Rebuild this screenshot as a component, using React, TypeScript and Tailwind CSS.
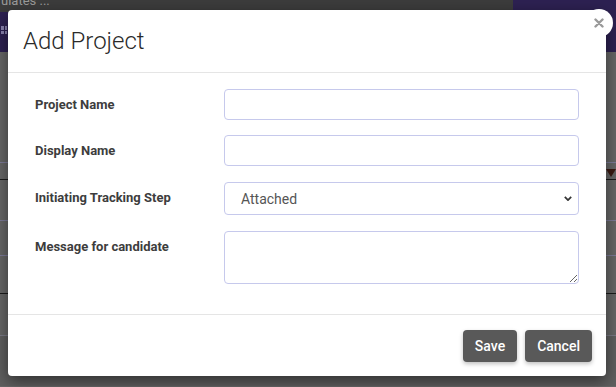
import { useState } from "react";

const font = { fontFamily: "Roboto, 'Liberation Sans', Arial, sans-serif" };

function CloseIcon() {
  return (
    <svg viewBox="0 0 10 10" className="size-[10px]">
      <path d="M1.5 1.5 L8.5 8.5 M8.5 1.5 L1.5 8.5" stroke="#9a9a9a" strokeWidth="2.4" strokeLinecap="round" />
    </svg>
  );
}

function Chevron() {
  return (
    <svg viewBox="0 0 10 6" className="w-[8px] h-[5px]">
      <path d="M1 1 L5 5 L9 1" fill="none" stroke="#343434" strokeWidth="2.2" />
    </svg>
  );
}

function FormRow({ label, children, className = "" }: { label: string; children: React.ReactNode; className?: string }) {
  return (
    <div className={`flex items-start ${className}`}>
      <label className="w-[189px] shrink-0 pt-[6px] text-[13px] font-bold leading-[19px] text-[#3d3d3d]">{label}</label>
      <div className="flex-1">{children}</div>
    </div>
  );
}

export default function App() {
  const [step, setStep] = useState("Attached");

  return (
    <div className="relative h-[387px] w-[616px] overflow-hidden bg-[#676767]" style={font}>
      {/* page behind the backdrop */}
      <div className="flex h-[12px]">
        <div className="flex-1 overflow-hidden bg-[#3c3c3c]">
          <div className="-mt-[7px] pl-[1px] text-[13px] leading-[16px] text-[#9b9b9b]">ulates ...</div>
        </div>
        <div className="w-[103px] bg-[#2d2152]" />
      </div>
      <div className="h-[40px] bg-[#2d2152] pt-[14px]">
        <div className="ml-[1px] grid h-[8px] w-[6px] grid-cols-2 gap-[1px]">
          <span className="bg-[#8a83b0]" />
          <span className="bg-[#8a83b0]" />
          <span className="bg-[#8a83b0]" />
          <span className="bg-[#8a83b0]" />
        </div>
      </div>
      <div className="h-[111px] border-b border-[#7c7b98]" />
      <div className="flex h-[17px] justify-end border-b border-[#1b1b1b]">
        <div className="mt-[6px] h-0 w-0 border-x-[5px] border-t-[8px] border-x-transparent border-t-[#3a1a12]" />
      </div>
      <div className="h-[41px] border-b border-[#7c7b98]" />
      <div className="h-[35px] border-b border-[#7c7b98]" />
      <div className="h-[38px] border-b border-[#1b1b1b]" />
      <div className="h-[42px] border-b border-[#7a7a86]" />
      <div className="h-[50px] bg-[#5f5f5f]" />

      {/* modal */}
      <div className="absolute left-[8px] top-[10px] w-[598px] rounded-[4px] bg-white shadow-[0_5px_15px_rgba(0,0,0,0.5)]">
        <button className="absolute right-[-7px] top-[-1px] flex size-[28px] items-center justify-center rounded-full bg-white">
          <CloseIcon />
        </button>

        <div className="flex h-[63px] items-center border-b border-[#e5e5e5] px-[15px]">
          <h4 className="text-[24px] font-light leading-[29px] text-[#2a2a2a]">Add Project</h4>
        </div>

        <div className="pb-[30px] pl-[27px] pr-[27px] pt-[16px]">
          <FormRow label="Project Name">
            <input className="block h-[31px] w-full rounded-[4px] border border-[#c6c9ec] px-[12px] text-[14px] outline-none" />
          </FormRow>
          <FormRow label="Display Name" className="mt-[15px]">
            <input className="block h-[31px] w-full rounded-[4px] border border-[#c6c9ec] px-[12px] text-[14px] outline-none" />
          </FormRow>
          <FormRow label="Initiating Tracking Step" className="mt-[16px]">
            <div className="relative">
              <select
                value={step}
                onChange={(e) => setStep(e.target.value)}
                className="block h-[33px] w-full appearance-none rounded-[4px] border border-[#c6c9ec] bg-white pl-[16px] pt-[1px] text-[14px] text-[#555] outline-none"
              >
                <option>Attached</option>
                <option>Screening</option>
                <option>Interview</option>
              </select>
              <span className="pointer-events-none absolute right-[7px] top-[14px] flex">
                <Chevron />
              </span>
            </div>
          </FormRow>
          <FormRow label="Message for candidate" className="mt-[16px]">
            <textarea className="block h-[53px] w-full rounded-[4px] border border-[#c6c9ec] px-[12px] text-[14px] outline-none" />
          </FormRow>
        </div>

        <div className="flex justify-end gap-[8px] border-t border-[#e5e5e5] px-[14px] pb-[14px] pt-[15px]">
          <button className="h-[32px] rounded-[4px] bg-[#595959] px-[12px] text-[14px] font-medium text-white shadow-[0_2px_4px_rgba(0,0,0,0.25)]">Save</button>
          <button className="h-[32px] rounded-[4px] bg-[#595959] px-[12px] text-[14px] font-medium text-white shadow-[0_2px_4px_rgba(0,0,0,0.25)]">Cancel</button>
        </div>
      </div>
    </div>
  );
}
